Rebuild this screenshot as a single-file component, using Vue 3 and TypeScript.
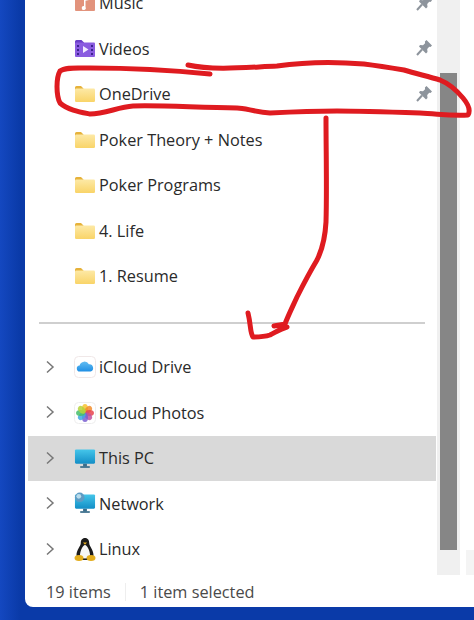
<script setup lang="ts">
type Row = { label: string; icon: string; pin?: boolean; active?: boolean }

const pinned: Row[] = [
  { label: 'Music', icon: 'music', pin: true },
  { label: 'Videos', icon: 'videos', pin: true },
  { label: 'OneDrive', icon: 'folder', pin: true },
  { label: 'Poker Theory + Notes', icon: 'folder' },
  { label: 'Poker Programs', icon: 'folder' },
  { label: '4. Life', icon: 'folder' },
  { label: '1. Resume', icon: 'folder' },
]

const places: Row[] = [
  { label: 'iCloud Drive', icon: 'cloud' },
  { label: 'iCloud Photos', icon: 'photos' },
  { label: 'This PC', icon: 'pc', active: true },
  { label: 'Network', icon: 'network' },
  { label: 'Linux', icon: 'linux' },
]

const petals = ['#f6c22f', '#f28c2c', '#e8434f', '#c0509e', '#7a5fd0', '#3fa8e0', '#45bd6a', '#b4d23a']
</script>

<template>
  <div class="desktop">
    <div class="explorer">
      <div class="content">
        <div class="tree">
          <div v-for="row in pinned" :key="row.label" class="row">
            <span class="icon">
              <svg v-if="row.icon === 'folder'" width="22" height="22" viewBox="0 0 22 22">
                <defs>
                  <linearGradient id="folderFill" x1="0" y1="0" x2="0" y2="1">
                    <stop offset="0" stop-color="#fde9a6" />
                    <stop offset="1" stop-color="#f9d468" />
                  </linearGradient>
                </defs>
                <path d="M1 4.500A1.500 1.500 0 0 1 2.500 3h4.500l2.500 2.500V9H1z" fill="#e6b23a" />
                <rect x="1" y="5.500" width="20" height="13.500" rx="1.200" fill="url(#folderFill)" />
              </svg>
              <svg v-else-if="row.icon === 'videos'" width="22" height="22" viewBox="0 0 22 22">
                <path d="M1 3.500A1.500 1.500 0 0 1 2.500 2h5L10 4.500V8H1z" fill="#6a3fc8" />
                <rect x="1" y="4.500" width="20" height="14.500" rx="1" fill="#8a5ce0" />
                <path d="M9 8l5.500 3.500L9 15z" fill="#f2ecff" />
                <path d="M3 7h2v2H3zM3 11h2v2H3zM3 15h2v2H3zM17 7h2v2h-2zM17 11h2v2h-2zM17 15h2v2h-2z" fill="#3d2390" />
              </svg>
              <svg v-else width="22" height="22" viewBox="0 0 22 22">
                <path d="M1 3.500A1.500 1.500 0 0 1 2.500 2h5L10 4.500V8H1z" fill="#c9605c" />
                <rect x="1" y="4.500" width="20" height="14.500" rx="1" fill="#e2937c" />
                <path d="M10 14V7.500l5-1V8l-3.500.700V15a2 2 0 1 1-1.500-1z" fill="#fff" />
              </svg>
            </span>
            <span class="label">{{ row.label }}</span>
            <svg v-if="row.pin" class="pin" width="17" height="17" viewBox="0 0 17 17">
              <path d="M1 16l5-5.500" stroke="#8d949c" stroke-width="2" fill="none" />
              <path d="M10.500 1L16 6.500l-1.500 1.500-1.300-.3-2 2.200.3 3-1.500 1.500-7-7L4 5.900l3 .4 2.100-2.100L8.900 2.500z" fill="#8d949c" />
            </svg>
          </div>
        </div>

        <div class="divider"></div>

        <div class="tree">
          <div v-for="row in places" :key="row.label" class="row" :class="{ active: row.active }">
            <svg class="chevron" width="10" height="14" viewBox="0 0 10 14">
              <path d="M2 1.500L8 7l-6 5.500" fill="none" stroke="#777" stroke-width="1.500" />
            </svg>
            <span class="icon">
              <svg v-if="row.icon === 'cloud'" width="22" height="22" viewBox="0 0 22 22">
                <defs>
                  <linearGradient id="cloudFill" x1="0" y1="0" x2="0" y2="1">
                    <stop offset="0" stop-color="#62bdf2" />
                    <stop offset="1" stop-color="#1f8fe4" />
                  </linearGradient>
                </defs>
                <rect x=".5" y=".5" width="21" height="21" rx="4" fill="#fff" stroke="#f0e8e8" />
                <path d="M6 15.500a3 3 0 0 1-.4-6 5 5 0 0 1 9.300-1.200 3.700 3.700 0 0 1 1.600 7.200z" fill="url(#cloudFill)" />
              </svg>
              <svg v-else-if="row.icon === 'photos'" width="22" height="22" viewBox="0 0 22 22">
                <rect x=".5" y=".5" width="21" height="21" rx="4" fill="#fff" stroke="#eee" />
                <ellipse
                  v-for="(color, i) in petals"
                  :key="color"
                  cx="11"
                  cy="6.500"
                  rx="3"
                  ry="4.500"
                  :fill="color"
                  fill-opacity=".85"
                  :transform="`rotate(${i * 45} 11 11)`"
                />
              </svg>
              <svg v-else-if="row.icon === 'linux'" width="22" height="25" viewBox="0 0 22 25">
                <path d="M11 1c3 0 4.200 2.400 4.200 5 0 3 4.300 7 4.300 12 0 3-3 5-8.500 5s-8.500-2-8.500-5c0-5 4.300-9 4.300-12 0-2.600 1.200-5 4.200-5z" fill="#1c1c1c" />
                <path d="M11 8c2 0 5 6 5 10 0 2.500-2 3.500-5 3.500S6 20.500 6 18c0-4 3-10 5-10z" fill="#f6f6f6" />
                <path d="M9 5.500h4l-2 2.200z" fill="#e8b020" />
                <ellipse cx="5" cy="21" rx="4.500" ry="3" fill="#e3ad1d" />
                <ellipse cx="17" cy="21" rx="4.500" ry="3" fill="#e3ad1d" />
              </svg>
              <svg v-else width="23" height="23" viewBox="0 0 23 23">
                <defs>
                  <linearGradient id="screenFill" x1="0" y1="0" x2="0" y2="1">
                    <stop offset="0" stop-color="#45c6ea" />
                    <stop offset="1" stop-color="#138ec6" />
                  </linearGradient>
                </defs>
                <rect x="1" y="2" width="21" height="15" rx="1.200" fill="url(#screenFill)" />
                <rect x="9.500" y="17" width="4" height="3" fill="#3c6f8c" />
                <rect x="6.500" y="19.500" width="10" height="1.800" fill="#3c6f8c" />
                <template v-if="row.icon === 'network'">
                  <circle cx="6" cy="5" r="5" fill="#5f9cc4" />
                  <circle cx="5" cy="4" r="2.500" fill="#b8dcec" />
                </template>
              </svg>
            </span>
            <span class="label">{{ row.label }}</span>
          </div>
        </div>

        <div class="scrollbar">
          <div class="thumb"></div>
        </div>
        <div class="scroll-end"></div>
      </div>

      <div class="status">
        <span>19 items</span>
        <span class="sep"></span>
        <span>1 item selected</span>
      </div>
    </div>

    <!-- hand drawn annotation on top of the screenshot -->
    <svg class="scribble" width="474" height="620" viewBox="0 0 474 620">
      <path
        d="M188 65C215 71 250 67 277 66C305 62 340 62 364 64C380 66 392 68 404 70C418 74 430 77 440 80C450 84 458 92 463 98C468 104 471 110 468 115C450 116 440 114 420 113C390 112 360 111 337 111C310 111 290 112 270 113C255 112 245 108 237 108C200 108 165 105 133 106C118 107 105 114 90 114C80 112 68 110 60 103C56 95 56 78 60 71C65 67 75 68 90 68C130 68 170 70 210 74"
        fill="none"
        stroke="#df1b20"
        stroke-width="5"
        stroke-linecap="round"
        stroke-linejoin="round"
      />
      <path
        d="M326 118C326 150 327 190 326 222C325 240 321 252 317 260C311 270 303 285 297 297C292 308 288 316 285 324C280 325 278 325 274 326M287 327C280 329 276 332 270 335C264 337 258 337 253 337C250 333 251 325 248 313"
        fill="none"
        stroke="#df1b20"
        stroke-width="5"
        stroke-linecap="round"
        stroke-linejoin="round"
      />
    </svg>
  </div>
</template>

<style scoped>
.desktop {
  position: relative;
  width: 474px;
  height: 620px;
  overflow: hidden;
  background: linear-gradient(90deg, #1448c0 0, #0a3aa8 20px, #0a3aa8 100%);
  font-family: "Open Sans", "Noto Sans", sans-serif;
  color: #2a2a2a;
}

.explorer {
  display: flex;
  flex-direction: column;
  margin-left: 25px;
  height: 607px;
  background: #fff;
  border-bottom-left-radius: 8px;
  overflow: hidden;
}

.content {
  position: relative;
  flex: 1;
  padding-left: 3px;
}

.tree {
  display: flex;
  flex-direction: column;
  width: 408px;
}

.tree:first-child {
  margin-top: -19.500px;
}

.row {
  display: flex;
  align-items: center;
  height: 45.5px;
  padding-left: 46px;
  font-size: 16.300px;
  position: relative;
}

.row.active {
  background: #d9d9d9;
}

.icon {
  display: flex;
  align-items: center;
  justify-content: center;
  width: 22px;
  height: 24px;
  margin-right: 3px;
}

.label {
  white-space: nowrap;
}

.pin {
  position: absolute;
  left: 388px;
  top: 13px;
}

.chevron {
  position: absolute;
  left: 17px;
  top: 15px;
}

.divider {
  width: 386px;
  height: 2px;
  margin: 22.500px 0 21px 11px;
  background: #cfcfcf;
}

.scrollbar {
  position: absolute;
  left: 412px;
  top: 0;
  bottom: 0;
  width: 23px;
  height: 575px;
  background: #f0f0f0;
}

.thumb {
  margin: 73px 3px 0;
  height: 477px;
  background: #868686;
}

.scroll-end {
  position: absolute;
  left: 441px;
  top: 550px;
  width: 8px;
  height: 25px;
  background: #f4f4f4;
}

.status {
  display: flex;
  align-items: center;
  height: 30px;
  padding: 1px 0 0 21px;
  font-size: 16.300px;
  color: #4a4a4a;
}

.sep {
  width: 1px;
  height: 18px;
  margin: 0 14px;
  background: #eee;
}

.scribble {
  position: absolute;
  left: 0;
  top: 0;
  pointer-events: none;
}
</style>

<style>
html,
body {
  background: #0a3aa8;
}
</style>
